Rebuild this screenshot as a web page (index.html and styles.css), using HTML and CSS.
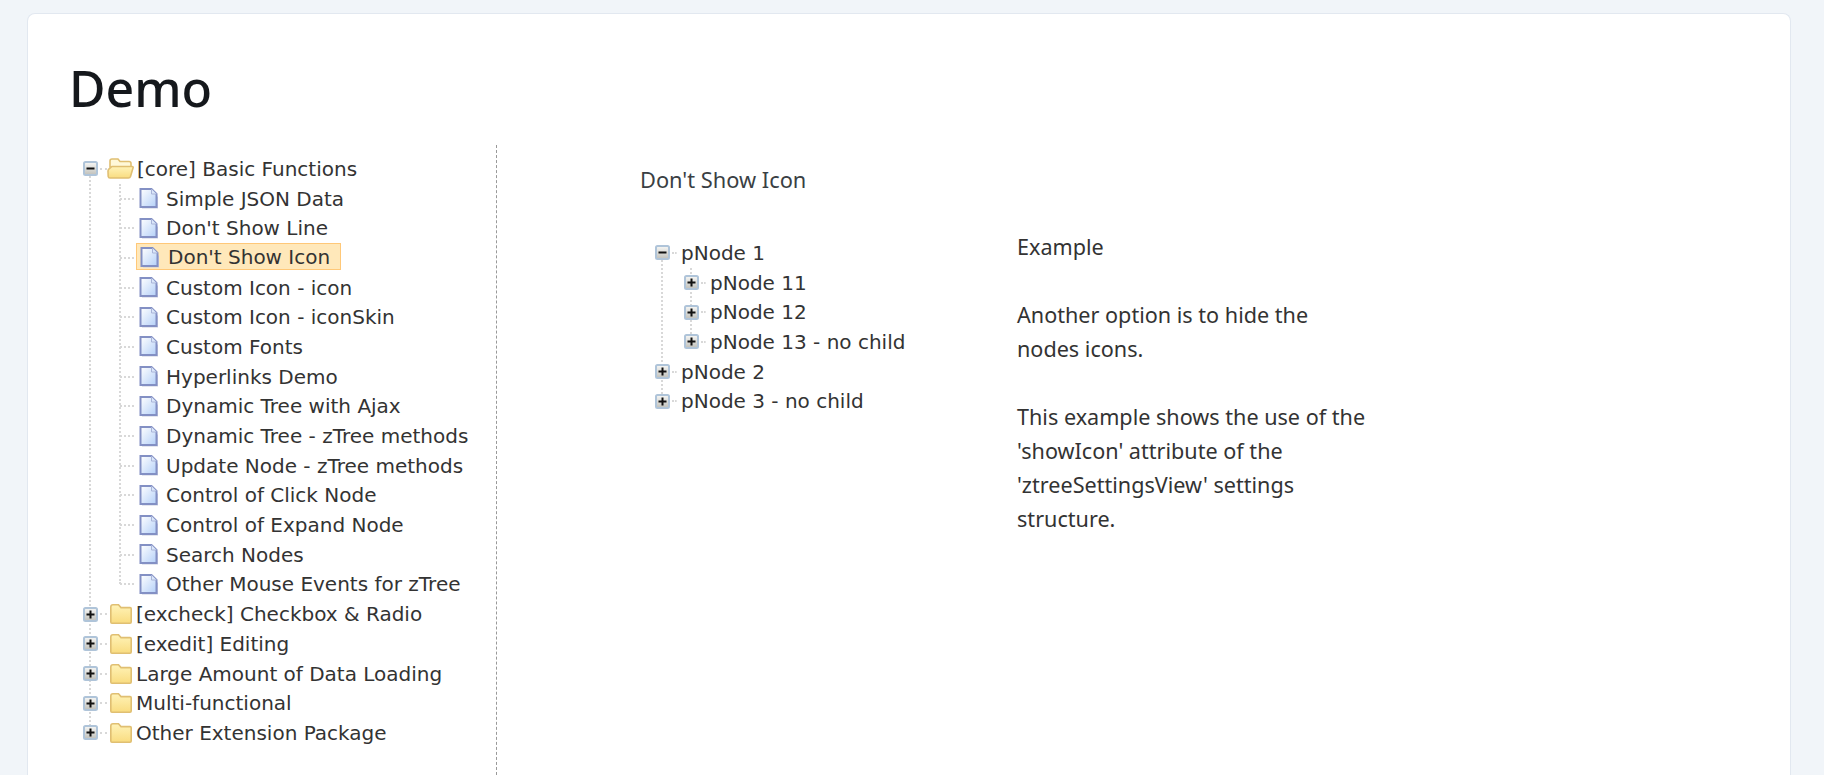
FILE: index.html
```html
<!DOCTYPE html>
<html lang="en">
<head>
    <meta charset="UTF-8">
    <meta name="viewport" content="width=device-width, initial-scale=1.0">
    <title>Demo</title>
    <link rel="stylesheet" href="styles.css">
</head>
<body>
    <svg class="icon-defs" width="0" height="0" aria-hidden="true">
        <defs>
            <linearGradient id="grad-folder" x1="0" y1="0" x2="0" y2="1">
                <stop offset="0" stop-color="#fff3b8"/>
                <stop offset="1" stop-color="#f9dc80"/>
            </linearGradient>
            <linearGradient id="grad-file" x1="0" y1="0" x2="1" y2="1">
                <stop offset="0" stop-color="#ffffff"/>
                <stop offset="1" stop-color="#b4d0f8"/>
            </linearGradient>
            <linearGradient id="grad-switch" x1="0" y1="0" x2="0" y2="1">
                <stop offset="0" stop-color="#f8f8f6"/>
                <stop offset="1" stop-color="#c0c0ba"/>
            </linearGradient>
            <symbol id="i-folder" viewBox="0 0 22 20">
                <path d="M.8 3Q.8 .8 3 .8H8.5L11 3.6H20Q21.2 3.6 21.2 4.8V18Q21.2 19.2 20 19.2H2Q.8 19.2 .8 18Z" fill="url(#grad-folder)" stroke="#e0bf72" stroke-width="1.6"/>
            </symbol>
            <symbol id="i-folder-open" viewBox="0 0 27 21">
                <path d="M3 9V3Q3 1 5 1H11L13 3.5H22Q24 3.5 24 5.5V9Z" fill="#fff8d8" stroke="#e0bf72" stroke-width="1.6"/>
                <path d="M5 8.5H25Q26.6 8.5 26 10L23.5 18.5Q23 20 21.5 20H3Q1.4 20 1.2 18.5L1 13Q1 11.5 2.5 10.5Z" fill="url(#grad-folder)" stroke="#e0bf72" stroke-width="1.6"/>
            </symbol>
            <symbol id="i-file" viewBox="0 0 20 21">
                <path d="M3 3H13L19 9V20.5H3Z" fill="#c9cde0"/>
                <path d="M1.5 1H12.5L17.5 6V19H1.5Z" fill="url(#grad-file)" stroke="#8390c4" stroke-width="2"/>
                <path d="M12.5 1V6H17.5" fill="#dbe7fa" stroke="#a9b4d8"/>
            </symbol>
            <symbol id="i-plus" viewBox="0 0 15 15">
                <rect x="1" y="1" width="13" height="13" rx="1.5" fill="url(#grad-switch)" stroke="#afc4d9" stroke-width="2"/>
                <path d="M3.5 7.5H11.5M7.5 3.5V11.5" stroke="#111" stroke-width="2"/>
            </symbol>
            <symbol id="i-minus" viewBox="0 0 15 15">
                <rect x="1" y="1" width="13" height="13" rx="1.5" fill="url(#grad-switch)" stroke="#afc4d9" stroke-width="2"/>
                <path d="M3.5 7.5H11.5" stroke="#111" stroke-width="2"/>
            </symbol>
        </defs>
    </svg>

    <div class="card">
        <h1>Demo</h1>
        <div class="layout">
            <div class="side">
                <ul class="tree tree-main">
                    <li>
                        <div class="row">
                            <svg class="sw"><use href="#i-minus"/></svg><span class="stub"></span>
                            <svg class="folder-open"><use href="#i-folder-open"/></svg>
                            <a class="node node-folder">[core] Basic Functions</a>
                        </div>
                        <ul class="tree leaves">
                            <li class="row"><span class="leaf-stub"></span><a class="node"><svg class="file"><use href="#i-file"/></svg>Simple JSON Data</a></li>
                            <li class="row"><span class="leaf-stub"></span><a class="node"><svg class="file"><use href="#i-file"/></svg>Don't Show Line</a></li>
                            <li class="row"><span class="leaf-stub"></span><a class="node selected"><svg class="file"><use href="#i-file"/></svg>Don't Show Icon</a></li>
                            <li class="row"><span class="leaf-stub"></span><a class="node"><svg class="file"><use href="#i-file"/></svg>Custom Icon - icon</a></li>
                            <li class="row"><span class="leaf-stub"></span><a class="node"><svg class="file"><use href="#i-file"/></svg>Custom Icon - iconSkin</a></li>
                            <li class="row"><span class="leaf-stub"></span><a class="node"><svg class="file"><use href="#i-file"/></svg>Custom Fonts</a></li>
                            <li class="row"><span class="leaf-stub"></span><a class="node"><svg class="file"><use href="#i-file"/></svg>Hyperlinks Demo</a></li>
                            <li class="row"><span class="leaf-stub"></span><a class="node"><svg class="file"><use href="#i-file"/></svg>Dynamic Tree with Ajax</a></li>
                            <li class="row"><span class="leaf-stub"></span><a class="node"><svg class="file"><use href="#i-file"/></svg>Dynamic Tree - zTree methods</a></li>
                            <li class="row"><span class="leaf-stub"></span><a class="node"><svg class="file"><use href="#i-file"/></svg>Update Node - zTree methods</a></li>
                            <li class="row"><span class="leaf-stub"></span><a class="node"><svg class="file"><use href="#i-file"/></svg>Control of Click Node</a></li>
                            <li class="row"><span class="leaf-stub"></span><a class="node"><svg class="file"><use href="#i-file"/></svg>Control of Expand Node</a></li>
                            <li class="row"><span class="leaf-stub"></span><a class="node"><svg class="file"><use href="#i-file"/></svg>Search Nodes</a></li>
                            <li class="row"><span class="leaf-stub"></span><a class="node"><svg class="file"><use href="#i-file"/></svg>Other Mouse Events for zTree</a></li>
                        </ul>
                    </li>
                    <li class="row"><svg class="sw"><use href="#i-plus"/></svg><span class="stub"></span><svg class="folder"><use href="#i-folder"/></svg><a class="node node-folder">[excheck] Checkbox &amp; Radio</a></li>
                    <li class="row"><svg class="sw"><use href="#i-plus"/></svg><span class="stub"></span><svg class="folder"><use href="#i-folder"/></svg><a class="node node-folder">[exedit] Editing</a></li>
                    <li class="row"><svg class="sw"><use href="#i-plus"/></svg><span class="stub"></span><svg class="folder"><use href="#i-folder"/></svg><a class="node node-folder">Large Amount of Data Loading</a></li>
                    <li class="row"><svg class="sw"><use href="#i-plus"/></svg><span class="stub"></span><svg class="folder"><use href="#i-folder"/></svg><a class="node node-folder">Multi-functional</a></li>
                    <li class="row"><svg class="sw"><use href="#i-plus"/></svg><span class="stub"></span><svg class="folder"><use href="#i-folder"/></svg><a class="node node-folder">Other Extension Package</a></li>
                </ul>
            </div>

            <div class="main">
                <p class="main-title">Don't Show Icon</p>
                <div class="demo">
                    <ul class="tree tree-demo">
                        <li>
                            <div class="row"><svg class="sw"><use href="#i-minus"/></svg><span class="stub stub-short"></span><a class="node-plain">pNode 1</a></div>
                            <ul class="tree sub-demo">
                                <li class="row"><svg class="sw"><use href="#i-plus"/></svg><span class="stub stub-short"></span><a class="node-plain">pNode 11</a></li>
                                <li class="row"><svg class="sw"><use href="#i-plus"/></svg><span class="stub stub-short"></span><a class="node-plain">pNode 12</a></li>
                                <li class="row"><svg class="sw"><use href="#i-plus"/></svg><span class="stub stub-short"></span><a class="node-plain">pNode 13 - no child</a></li>
                            </ul>
                        </li>
                        <li class="row"><svg class="sw"><use href="#i-plus"/></svg><span class="stub stub-short"></span><a class="node-plain">pNode 2</a></li>
                        <li class="row"><svg class="sw"><use href="#i-plus"/></svg><span class="stub stub-short"></span><a class="node-plain">pNode 3 - no child</a></li>
                    </ul>
                    <div class="notes">
                        <p>Example</p>
                        <p>Another option is to hide the nodes icons.</p>
                        <p>This example shows the use of the 'showIcon' attribute of the 'ztreeSettingsView' settings structure.</p>
                    </div>
                </div>
            </div>
        </div>
    </div>
</body>
</html>
```

FILE: styles.css
```css
html, body {
    height: 100%;
}

body {
    margin: 0;
    padding: 13px 33px 0 27px;
    box-sizing: border-box;
    overflow: hidden;
    background-color: #f1f5f9;
    color: #333;
    font-family: "Noto Sans", "Open Sans", sans-serif;
}

.icon-defs {
    position: absolute;
}

.card {
    display: flex;
    flex-direction: column;
    height: 100%;
    box-sizing: border-box;
    padding: 0 42px;
    background-color: #fff;
    border: 1px solid #e2e8f0;
    border-bottom: none;
    border-radius: 8px 8px 0 0;
}

h1 {
    margin: 0 0 0 -1px;
    padding-top: 45px;
    height: 86px;
    font-size: 50px;
    line-height: 58px;
    font-weight: 500;
    color: #15181c;
}

.layout {
    display: flex;
    flex: 1;
}

.side {
    width: 426px;
    padding-top: 9px;
    border-right: 1px dashed #999;
    font-family: "DejaVu Sans", sans-serif;
}

ul.tree {
    list-style: none;
    margin: 0;
    padding: 0;
    position: relative;
}

.row {
    display: flex;
    align-items: center;
    height: 29.7px;
}

.tree a {
    color: #333;
    white-space: nowrap;
}

ul.tree-main {
    padding-left: 13px;
    font-size: 20px;
}

/* dotted connectors */
.tree-main::before,
.leaves::before,
.tree-demo::before,
.sub-demo::before {
    content: "";
    position: absolute;
    border-left: 2px dotted #d8d8d8;
}

.tree-main::before {
    left: 19px;
    top: 15px;
    bottom: 15px;
}

.leaves::before {
    left: 36px;
    top: 0;
    bottom: 15px;
}

.sw {
    width: 15px;
    height: 15px;
    flex: none;
    position: relative;
    z-index: 1;
}

.stub {
    flex: none;
    width: 7px;
    margin-left: 2px;
    border-top: 2px dotted #d8d8d8;
}

.stub-short {
    width: 5px;
}

.folder {
    width: 22px;
    height: 20px;
    flex: none;
    margin: 0 1px 0 3px;
}

.folder-open {
    width: 27px;
    height: 21px;
    flex: none;
}

.node {
    display: flex;
    align-items: center;
    height: 25px;
    padding: 0 1px 0 2px;
    border: 1px solid transparent;
}

.node-folder {
    padding: 0;
    margin-left: 2px;
}

.leaf-stub {
    flex: none;
    width: 14px;
    margin-left: 37px;
    margin-right: 2px;
    border-top: 2px dotted #d8d8d8;
}

.file {
    width: 20px;
    height: 21px;
    flex: none;
    margin-right: 7px;
}

.node.selected {
    height: 23px;
    padding: 2px 10px 0 3px;
    margin-top: -3px;
    background-color: #ffe8ba;
    border-color: #ffc878;
}

.node.selected .file {
    margin-right: 8px;
}

.main {
    padding-left: 143px;
    flex: 1;
}

.main-title {
    margin: 0;
    padding-top: 18px;
    height: 67px;
    font-size: 21.8px;
    line-height: 34px;
    color: #3a3f44;
}

.demo {
    display: flex;
    align-items: flex-start;
}

ul.tree-demo {
    width: 362px;
    margin-top: 8px;
    padding-left: 15px;
    font-family: "DejaVu Sans", sans-serif;
    font-size: 20px;
}

.tree-demo::before {
    left: 21px;
    top: 15px;
    bottom: 15px;
}

ul.sub-demo {
    padding-left: 29px;
}

.sub-demo::before {
    left: 35px;
    top: 0;
    bottom: 15px;
}

.node-plain {
    margin-left: 4px;
}

.notes {
    width: 352px;
    font-size: 21.6px;
    line-height: 34px;
    color: #333;
}

.notes p {
    margin: 0 0 34px;
}
```
